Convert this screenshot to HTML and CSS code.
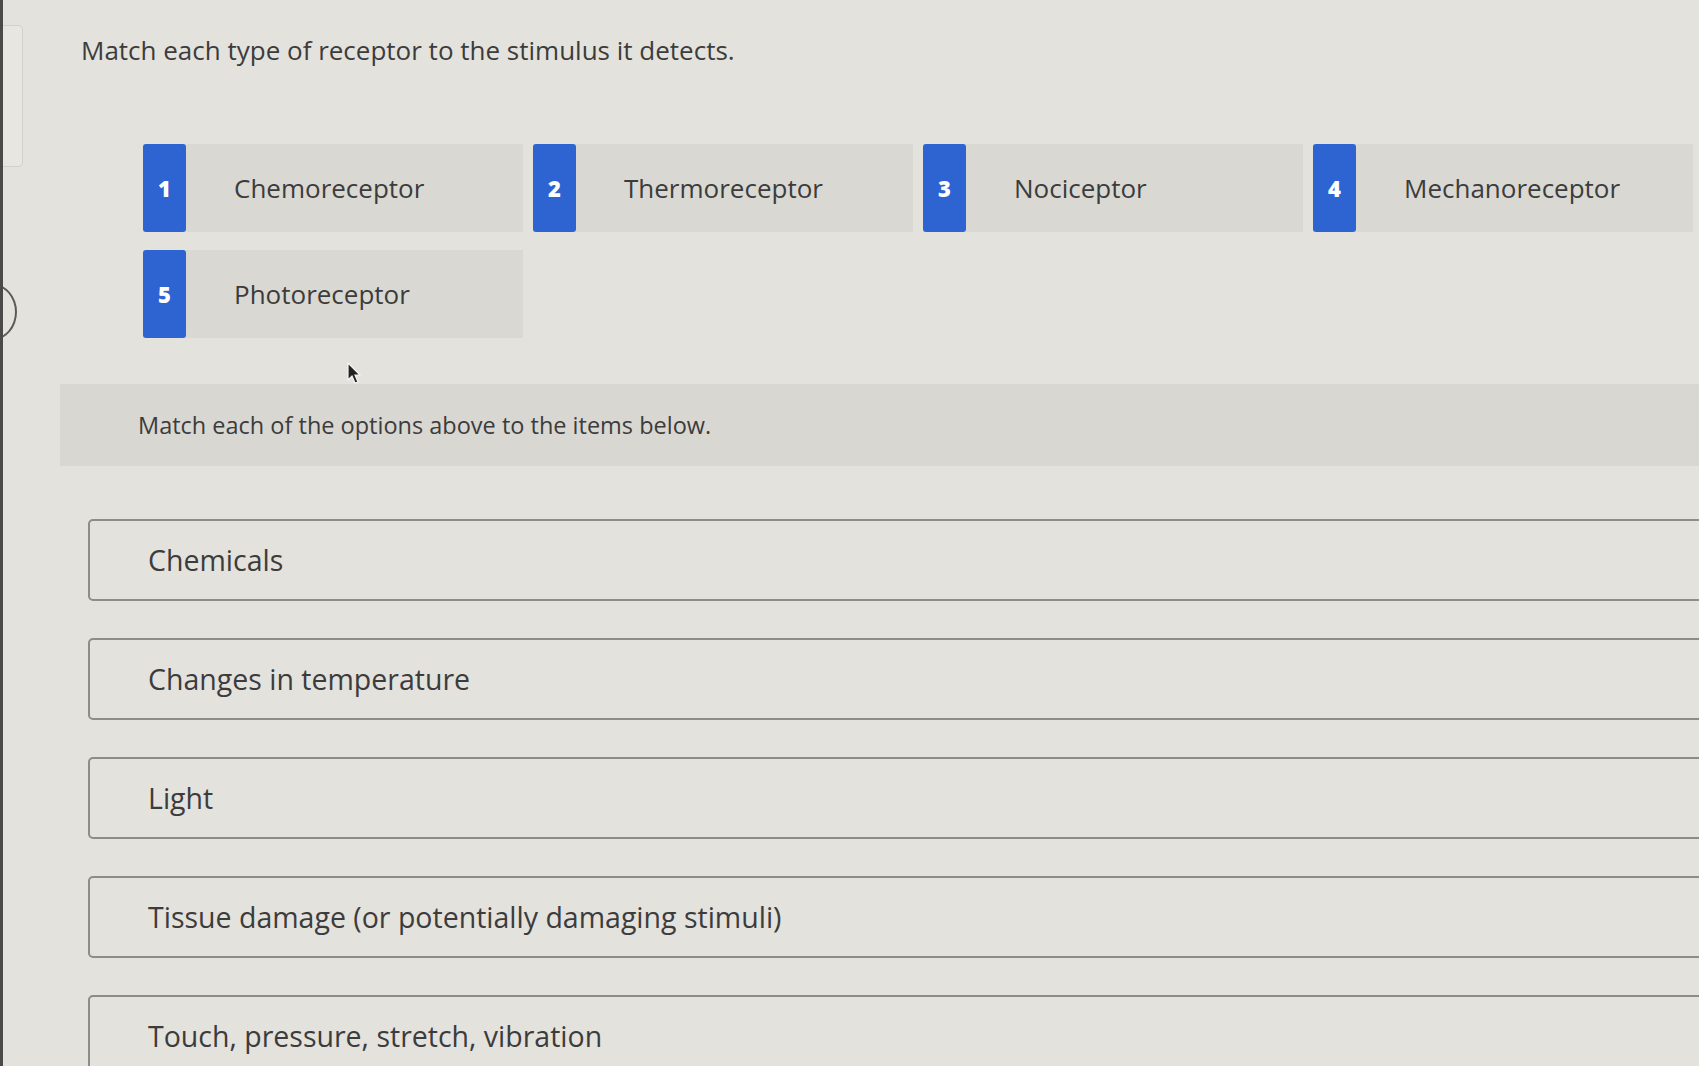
FILE: index.html
```html
<!DOCTYPE html>
<html lang="en">
<head>
    <meta charset="UTF-8">
    <title>Matching Question</title>
    <meta name="viewport" content="width=device-width, initial-scale=1.0">
    <link rel="stylesheet" href="styles.css">
</head>
<body>
    <div class="screen">
        <div class="side-tab"></div>
        <div class="side-ring"></div>

        <p class="prompt">Match each type of receptor to the stimulus it detects.</p>

        <div class="options">
            <div class="option"><span class="badge">1</span><span class="option-label">Chemoreceptor</span></div>
            <div class="option"><span class="badge">2</span><span class="option-label">Thermoreceptor</span></div>
            <div class="option"><span class="badge">3</span><span class="option-label">Nociceptor</span></div>
            <div class="option"><span class="badge">4</span><span class="option-label">Mechanoreceptor</span></div>
            <div class="option"><span class="badge">5</span><span class="option-label">Photoreceptor</span></div>
        </div>

        <div class="match-panel">
            <p>Match each of the options above to the items below.</p>
        </div>

        <div class="targets">
            <div class="target">Chemicals</div>
            <div class="target">Changes in temperature</div>
            <div class="target">Light</div>
            <div class="target">Tissue damage (or potentially damaging stimuli)</div>
            <div class="target">Touch, pressure, stretch, vibration</div>
        </div>

        <!-- mouse pointer -->
        <svg class="pointer" width="16" height="24" viewBox="0 0 16 24">
            <path d="M1 1 L1 18 L5 14 L8 21 L11 20 L8 13 L13 13 Z" fill="#222" stroke="#f4f4f4" stroke-width="1.2"/>
        </svg>
    </div>
</body>
</html>
```

FILE: styles.css
```css
body {
    margin: 0;
    font-family: "Open Sans", Lato, Arial, sans-serif;
    background-color: #e4e2dd;
    color: #3c3c3c;
    overflow: hidden;
}
.screen {
    position: relative;
    height: 1066px;
    border-left: 3px solid #4a4a48;
    overflow: hidden;
}
/* bits of the sidebar poking in at the left edge */
.side-tab {
    position: absolute;
    left: -8px;
    top: 25px;
    width: 26px;
    height: 140px;
    border: 1px solid #d3d1cc;
    border-radius: 4px;
    background-color: #e8e6e1;
}
.side-ring {
    position: absolute;
    left: -34px;
    top: 284px;
    width: 44px;
    height: 52px;
    border: 2px solid #5a5a58;
    border-radius: 50%;
}
.prompt {
    margin: 0;
    padding: 34px 0 0 78px;
    font-size: 26px;
    line-height: 32px;
}
.options {
    display: grid;
    grid-template-columns: repeat(4, 380px);
    column-gap: 10px;
    row-gap: 18px;
    margin-top: 78px;
    padding-left: 140px;
}
.option {
    display: flex;
    align-items: center;
    height: 88px;
    background-color: #dad8d3;
}
.badge {
    display: flex;
    align-items: center;
    justify-content: center;
    align-self: stretch;
    width: 43px;
    background-color: #2e64d2;
    border-radius: 3px;
    color: white;
    font-weight: 800;
    font-size: 22px;
}
.option-label {
    padding-left: 48px;
    font-size: 26px;
}
.match-panel {
    display: flex;
    align-items: center;
    height: 82px;
    margin: 46px 0 0 57px;
    padding-left: 78px;
    background-color: #d9d7d2;
}
.match-panel p {
    margin: 0;
    font-size: 23.5px;
}
.targets {
    display: flex;
    flex-direction: column;
    gap: 37px;
    margin-top: 53px;
    padding-left: 85px;
}
.target {
    display: flex;
    align-items: center;
    height: 78px;
    width: 1700px;
    padding-left: 58px;
    border: 2px solid #8c8c8a;
    border-radius: 5px;
    font-size: 28.5px;
}
.pointer {
    position: absolute;
    left: 344px;
    top: 362px;
}
```
